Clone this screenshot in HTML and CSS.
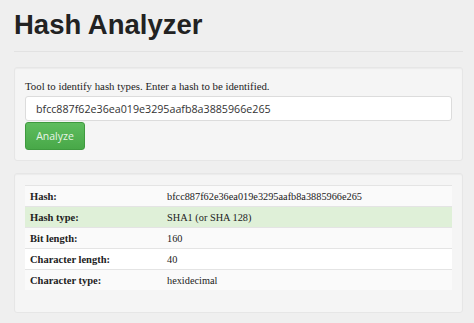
FILE: index.html
```
<!DOCTYPE html>
<html lang="en">
<head>
    <meta charset="UTF-8">
    <title>Hash Analyzer</title>
    <link rel="stylesheet" href="styles.css">
</head>
<body>
    <div class="page">
        <div class="page-header">
            <h1>Hash Analyzer</h1>
        </div>

        <div class="well">
            <p class="intro">Tool to identify hash types. Enter a hash to be identified.</p>
            <input class="hash-input" type="text" value="bfcc887f62e36ea019e3295aafb8a3885966e265">
            <button class="btn-analyze">Analyze</button>
        </div>

        <div class="well result">
            <table class="result-table">
                <colgroup>
                    <col class="label-col">
                    <col>
                </colgroup>
                <tr class="odd">
                    <th>Hash:</th>
                    <td>bfcc887f62e36ea019e3295aafb8a3885966e265</td>
                </tr>
                <tr class="success">
                    <th>Hash type:</th>
                    <td>SHA1 (or SHA 128)</td>
                </tr>
                <tr class="odd">
                    <th>Bit length:</th>
                    <td>160</td>
                </tr>
                <tr>
                    <th>Character length:</th>
                    <td>40</td>
                </tr>
                <tr class="odd">
                    <th>Character type:</th>
                    <td>hexidecimal</td>
                </tr>
            </table>
        </div>
    </div>
</body>
</html>
```

FILE: styles.css
```
body {
    margin: 0;
    background-color: #efefef;
    font-family: 'Liberation Serif', 'Times New Roman', serif;
    color: #333;
}

.page {
    padding: 0 11px 0 14px;
}

.page-header {
    border-bottom: 1px solid #e2e2e2;
    padding: 9px 0 10px;
}

h1 {
    margin: 0;
    font-family: 'Liberation Sans', Arial, sans-serif;
    font-size: 27.5px;
    font-weight: bold;
    color: #222;
    line-height: 32px;
}

.well {
    margin-top: 15px;
    background-color: #f5f5f5;
    border: 1px solid #e6e6e6;
    border-radius: 3px;
    box-shadow: inset 0 1px 1px rgba(0, 0, 0, 0.04);
    padding: 10px;
}

.intro {
    margin: 0 0 1px;
    font-size: 10.8px;
    line-height: 17px;
    color: #222;
}

.hash-input {
    display: block;
    box-sizing: border-box;
    width: 100%;
    height: 25px;
    padding: 0 10px;
    border: 1px solid #dcdcdc;
    border-radius: 3px;
    background: #fff;
    font-family: 'Open Sans', sans-serif;
    font-size: 10.7px;
    color: #333;
}

.btn-analyze {
    display: block;
    margin-top: 1px;
    width: 60px;
    height: 28px;
    padding: 0;
    border: 1px solid #3f9a3f;
    border-radius: 3px;
    background: linear-gradient(#5fbd5f, #48a848);
    color: #e8f5e8;
    font-family: 'Open Sans', sans-serif;
    font-size: 10.5px;
}

.result {
    margin-top: 12px;
    padding: 11px 10px 22px;
}

.result-table {
    width: 100%;
    table-layout: fixed;
    border-collapse: collapse;
    background: #fff;
    font-size: 10.5px;
    color: #222;
}

.label-col {
    width: 137px;
}

.result-table th,
.result-table td {
    height: 20px;
    padding: 0 5px;
    border-top: 1px solid #e4e4e4;
    text-align: left;
    vertical-align: middle;
    white-space: nowrap;
}

.result-table td {
    font-size: 10.3px;
}

.result-table tr.odd {
    background-color: #fafafa;
}

.result-table tr.success {
    background-color: #dff0d8;
}
```
